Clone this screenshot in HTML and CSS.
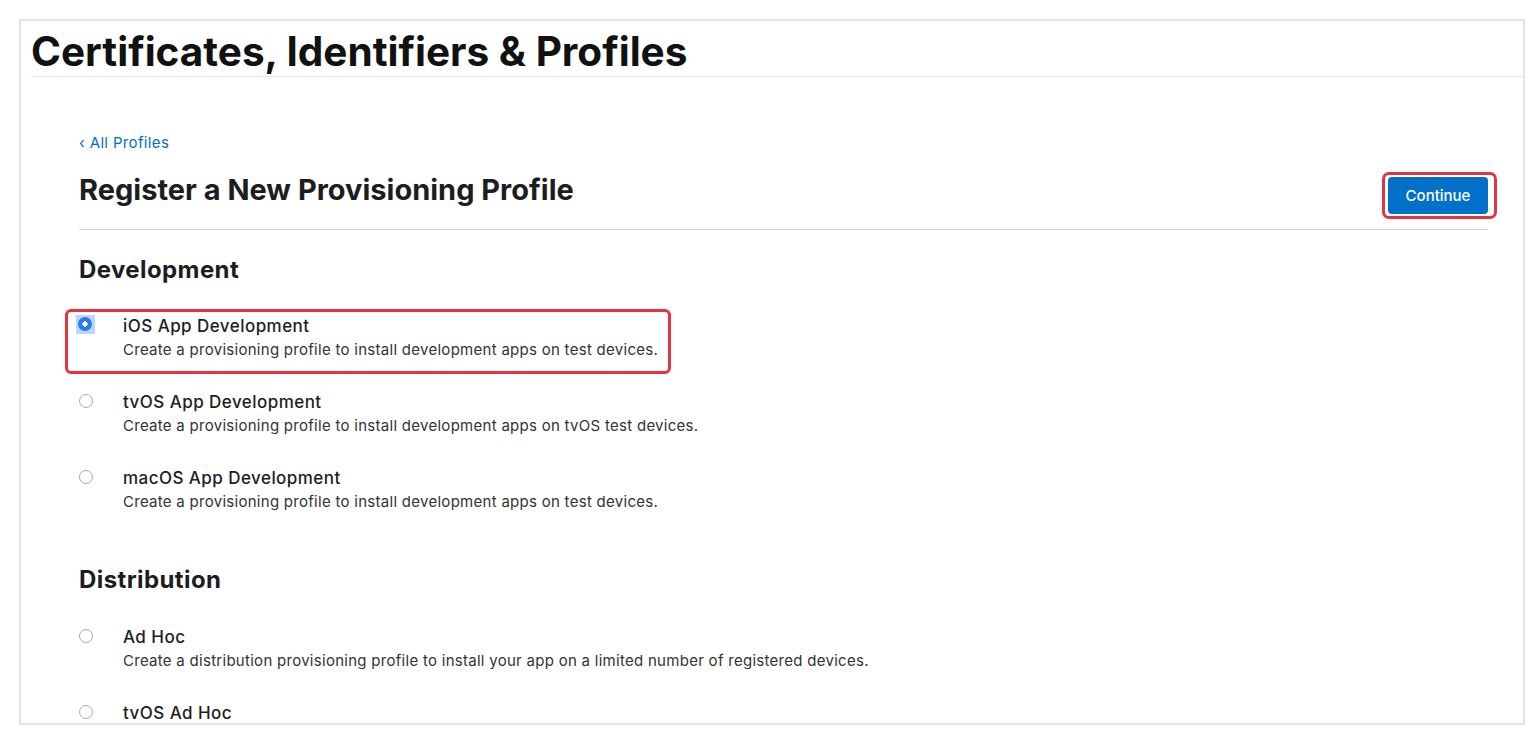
FILE: index.html
```html
<!DOCTYPE html>
<html lang="en">
<head>
<meta charset="utf-8">
<title>Certificates, Identifiers &amp; Profiles</title>
<link rel="stylesheet" href="styles.css">
</head>
<body>
<div class="frame">
  <header class="page-header">
    <h1 class="page-title">Certificates, Identifiers &amp; Profiles</h1>
  </header>
  <main class="main">
    <a class="back-link" href="#">&lsaquo; All Profiles</a>
    <div class="title-row">
      <h2 class="form-title">Register a New Provisioning Profile</h2>
      <button class="btn-continue highlighted" type="button">Continue</button>
    </div>

    <section class="section">
      <h3 class="section-title">Development</h3>
      <div class="option highlighted-option">
        <span class="radio-col"><span class="radio-focus"><span class="radio radio-checked"></span></span></span>
        <div class="option-text">
          <div class="option-title">iOS App Development</div>
          <div class="option-desc">Create a provisioning profile to install development apps on test devices.</div>
        </div>
      </div>
      <div class="option">
        <span class="radio-col"><span class="radio"></span></span>
        <div class="option-text">
          <div class="option-title">tvOS App Development</div>
          <div class="option-desc">Create a provisioning profile to install development apps on tvOS test devices.</div>
        </div>
      </div>
      <div class="option">
        <span class="radio-col"><span class="radio"></span></span>
        <div class="option-text">
          <div class="option-title">macOS App Development</div>
          <div class="option-desc">Create a provisioning profile to install development apps on test devices.</div>
        </div>
      </div>
    </section>

    <section class="section">
      <h3 class="section-title">Distribution</h3>
      <div class="option">
        <span class="radio-col"><span class="radio"></span></span>
        <div class="option-text">
          <div class="option-title">Ad Hoc</div>
          <div class="option-desc">Create a distribution provisioning profile to install your app on a limited number of registered devices.</div>
        </div>
      </div>
      <div class="option">
        <span class="radio-col"><span class="radio"></span></span>
        <div class="option-text">
          <div class="option-title">tvOS Ad Hoc</div>
          <div class="option-desc">Create a distribution provisioning profile to install your app on a limited number of registered tvOS devices.</div>
        </div>
      </div>
    </section>
  </main>
</div>
</body>
</html>
```
FILE: styles.css
```css
* {
  box-sizing: border-box;
}

html, body {
  margin: 0;
  padding: 0;
  background: #ffffff;
}

body {
  font-family: Inter, "Liberation Sans", sans-serif;
  color: #1d1d1f;
}

.frame {
  margin: 19px 0 0 19px;
  width: 1506px;
  height: 706px;
  border: 2px solid #e4e4e4;
  overflow: hidden;
  background: #fff;
}

.page-header {
  margin-left: 10px;
  padding-top: 7px;
  border-bottom: 1px solid #e6e6e6;
}

.page-title {
  margin: 0;
  font-size: 40.5px;
  line-height: 48px;
  font-weight: 700;
  letter-spacing: 0;
  color: #111;
}

.main {
  padding: 0 35px 0 58px;
}

.back-link {
  display: block;
  margin-top: 56px;
  font-size: 15px;
  line-height: 20px;
  letter-spacing: 0.35px;
  color: #0070c9;
  text-decoration: none;
}

.title-row {
  display: flex;
  justify-content: space-between;
  align-items: flex-start;
  margin-top: 20px;
  padding-bottom: 15px;
  border-bottom: 1px solid #d6d6d6;
}

.form-title {
  margin: 0;
  font-size: 29px;
  line-height: 34px;
  font-weight: 700;
  letter-spacing: 0;
  color: #1d1d1f;
}

.btn-continue {
  margin-top: 4px;
  width: 100px;
  height: 37px;
  border: none;
  border-radius: 4px;
  background: #0070c9;
  color: #fff;
  font-family: Inter, "Liberation Sans", sans-serif;
  font-size: 15px;
  font-weight: 500;
  line-height: 35px;
  padding: 0;
}

.highlighted {
  position: relative;
}

.highlighted::after {
  content: "";
  position: absolute;
  top: -5px;
  left: -6px;
  right: -9px;
  bottom: -5px;
  border: 3px solid #e8323f;
  border-radius: 7px;
}

.section-title {
  margin: 26px 0 0;
  padding-bottom: 1px;
  font-size: 24px;
  line-height: 28px;
  font-weight: 700;
  letter-spacing: 0.4px;
  color: #1d1d1f;
}

.section + .section {
  margin-top: 53px;
}

.section + .section .section-title {
  margin-top: 0;
  padding-bottom: 2px;
}

.option {
  display: flex;
  margin-top: 29px;
}

.highlighted-option {
  position: relative;
}

.highlighted-option::after {
  content: "";
  position: absolute;
  top: -5px;
  left: -14px;
  width: 600px;
  height: 59px;
  border: 3px solid #e8323f;
  border-radius: 6px;
}

.radio-col {
  flex: 0 0 44px;
  display: block;
  padding-top: 4px;
}

.radio {
  display: block;
  width: 14px;
  height: 14px;
  border-radius: 50%;
  border: 1px solid #a9a9a9;
  background: #fff;
}

.radio-focus {
  display: block;
  width: 19px;
  height: 19px;
  margin: -3px 0 0 -3px;
  padding: 2px 3px 3px 2px;
  background: #bcd7fb;
}

.radio-checked {
  border: none;
  background: radial-gradient(circle, #ffffff 0 2.4px, #2a7bf0 2.9px);
}

.option-text {
  flex: 1;
}

.option-title {
  font-size: 17px;
  line-height: 24px;
  font-weight: 500;
  letter-spacing: 0.45px;
  color: #1d1d1f;
}

.option-desc {
  font-size: 15px;
  line-height: 23px;
  letter-spacing: 0.28px;
  color: #333;
}
```
